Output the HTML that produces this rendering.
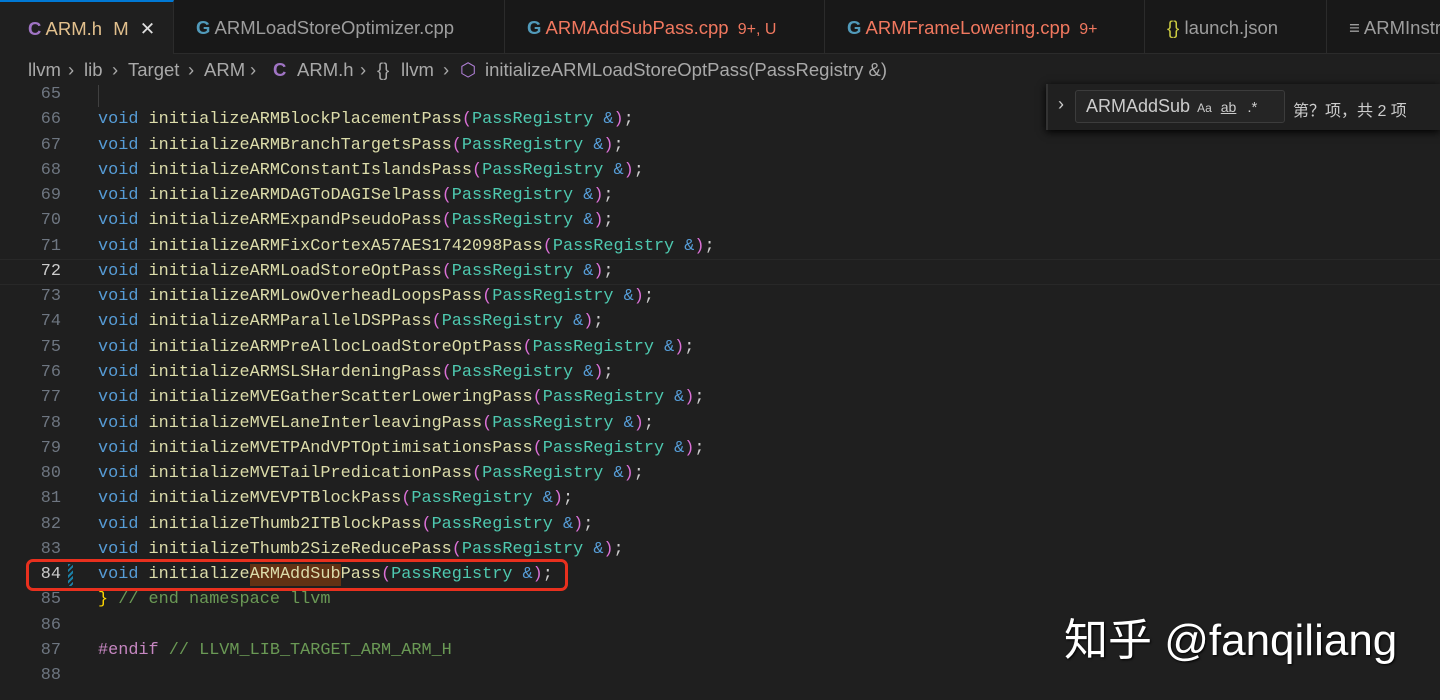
<!DOCTYPE html>
<html><head><meta charset="utf-8"><style>
*{margin:0;padding:0;box-sizing:border-box}
body{width:1440px;height:700px;background:#1f1f1f;overflow:hidden;position:relative;font-family:"Liberation Sans","Noto Sans CJK SC",sans-serif}
.tabs{position:absolute;left:0;top:0;width:1440px;height:54px;background:#181818;border-bottom:1px solid #2b2b2b}
.tab{position:absolute;top:0;height:54px;border-right:1px solid #2b2b2b;font-size:18.5px;line-height:56px;color:#9d9d9d;white-space:nowrap}
.tab.active{background:#1f1f1f;border-top:2px solid #0078d4;line-height:54px;color:#fff}
.crumb{position:absolute;top:57px;font-size:18.5px;color:#a9a9a9;line-height:26px;white-space:nowrap}
.ln{position:absolute;left:0;width:1440px;height:25.27px;line-height:25.27px;white-space:pre;font-family:"Liberation Mono",monospace;font-size:16.85px}
.num{position:absolute;left:0;width:61px;text-align:right;color:#6e7681}
.cd{position:absolute;left:98px}
.v{color:#569cd6}.f{color:#dcdcaa}.t{color:#4ec9b0}.p{color:#da70d6}.c{color:#6a9955}.k{color:#c586c0}.y{color:#ffd700}.w{color:#cccccc}
</style></head><body>
<div class="tabs">
<div class="tab active" style="left:0;width:174px;padding-left:28px"><span style="color:#a074c4;font-weight:bold">C</span> <span style="color:#e2c08d">ARM.h</span> <span style="color:#e2c08d;margin-left:6px">M</span> <span style="margin-left:6px;color:#ddd">✕</span></div>
<div class="tab" style="left:174px;width:331px;padding-left:22px"><span style="color:#519aba;font-weight:bold">G</span> ARMLoadStoreOptimizer.cpp</div>
<div class="tab" style="left:505px;width:320px;padding-left:22px;color:#f1785f"><span style="color:#519aba;font-weight:bold">G</span> ARMAddSubPass.cpp <span style="font-size:16px;margin-left:4px">9+, U</span></div>
<div class="tab" style="left:825px;width:320px;padding-left:22px;color:#f1785f"><span style="color:#519aba;font-weight:bold">G</span> ARMFrameLowering.cpp <span style="font-size:16px;margin-left:4px">9+</span></div>
<div class="tab" style="left:1145px;width:182px;padding-left:22px"><span style="color:#cbcb41">{}</span> launch.json</div>
<div class="tab" style="left:1327px;width:200px;padding-left:22px">≡ ARMInstrInfo</div>
</div>
<div class="crumb" style="left:28px">llvm</div>
<div class="crumb" style="left:68px">›</div>
<div class="crumb" style="left:84px">lib</div>
<div class="crumb" style="left:112px">›</div>
<div class="crumb" style="left:128px">Target</div>
<div class="crumb" style="left:188px">›</div>
<div class="crumb" style="left:204px">ARM</div>
<div class="crumb" style="left:250px">›</div>
<div class="crumb" style="left:273px;color:#a074c4;font-weight:bold">C</div>
<div class="crumb" style="left:297px">ARM.h</div>
<div class="crumb" style="left:360px">›</div>
<div class="crumb" style="left:377px">{}</div>
<div class="crumb" style="left:401px">llvm</div>
<div class="crumb" style="left:443px">›</div>
<div class="crumb" style="left:460px;color:#b180d7">⬡</div>
<div class="crumb" style="left:485px">initializeARMLoadStoreOptPass(PassRegistry &amp;)</div>
<div style="position:absolute;left:98px;top:85px;width:1px;height:22px;background:#404040"></div>
<div style="position:absolute;left:0;top:259px;width:1440px;height:26px;border-top:1px solid #282828;border-bottom:1px solid #282828"></div>
<div style="position:absolute;left:250px;top:564px;width:91px;height:22px;background:#613214"></div>

<div class="ln" style="top:82px"><span class="num">65</span></div>
<div class="ln" style="top:107.27px"><span class="num">66</span><span class="cd"><span class="v">void</span> <span class="f">initializeARMBlockPlacementPass</span><span class="p">(</span><span class="t">PassRegistry</span> <span class="v">&amp;</span><span class="p">)</span><span class="w">;</span></span></div>
<div class="ln" style="top:132.54px"><span class="num">67</span><span class="cd"><span class="v">void</span> <span class="f">initializeARMBranchTargetsPass</span><span class="p">(</span><span class="t">PassRegistry</span> <span class="v">&amp;</span><span class="p">)</span><span class="w">;</span></span></div>
<div class="ln" style="top:157.81px"><span class="num">68</span><span class="cd"><span class="v">void</span> <span class="f">initializeARMConstantIslandsPass</span><span class="p">(</span><span class="t">PassRegistry</span> <span class="v">&amp;</span><span class="p">)</span><span class="w">;</span></span></div>
<div class="ln" style="top:183.08px"><span class="num">69</span><span class="cd"><span class="v">void</span> <span class="f">initializeARMDAGToDAGISelPass</span><span class="p">(</span><span class="t">PassRegistry</span> <span class="v">&amp;</span><span class="p">)</span><span class="w">;</span></span></div>
<div class="ln" style="top:208.35px"><span class="num">70</span><span class="cd"><span class="v">void</span> <span class="f">initializeARMExpandPseudoPass</span><span class="p">(</span><span class="t">PassRegistry</span> <span class="v">&amp;</span><span class="p">)</span><span class="w">;</span></span></div>
<div class="ln" style="top:233.62px"><span class="num">71</span><span class="cd"><span class="v">void</span> <span class="f">initializeARMFixCortexA57AES1742098Pass</span><span class="p">(</span><span class="t">PassRegistry</span> <span class="v">&amp;</span><span class="p">)</span><span class="w">;</span></span></div>
<div class="ln" style="top:258.89px"><span class="num" style="color:#ccc">72</span><span class="cd"><span class="v">void</span> <span class="f">initializeARMLoadStoreOptPass</span><span class="p">(</span><span class="t">PassRegistry</span> <span class="v">&amp;</span><span class="p">)</span><span class="w">;</span></span></div>
<div class="ln" style="top:284.16px"><span class="num">73</span><span class="cd"><span class="v">void</span> <span class="f">initializeARMLowOverheadLoopsPass</span><span class="p">(</span><span class="t">PassRegistry</span> <span class="v">&amp;</span><span class="p">)</span><span class="w">;</span></span></div>
<div class="ln" style="top:309.43px"><span class="num">74</span><span class="cd"><span class="v">void</span> <span class="f">initializeARMParallelDSPPass</span><span class="p">(</span><span class="t">PassRegistry</span> <span class="v">&amp;</span><span class="p">)</span><span class="w">;</span></span></div>
<div class="ln" style="top:334.7px"><span class="num">75</span><span class="cd"><span class="v">void</span> <span class="f">initializeARMPreAllocLoadStoreOptPass</span><span class="p">(</span><span class="t">PassRegistry</span> <span class="v">&amp;</span><span class="p">)</span><span class="w">;</span></span></div>
<div class="ln" style="top:359.97px"><span class="num">76</span><span class="cd"><span class="v">void</span> <span class="f">initializeARMSLSHardeningPass</span><span class="p">(</span><span class="t">PassRegistry</span> <span class="v">&amp;</span><span class="p">)</span><span class="w">;</span></span></div>
<div class="ln" style="top:385.24px"><span class="num">77</span><span class="cd"><span class="v">void</span> <span class="f">initializeMVEGatherScatterLoweringPass</span><span class="p">(</span><span class="t">PassRegistry</span> <span class="v">&amp;</span><span class="p">)</span><span class="w">;</span></span></div>
<div class="ln" style="top:410.51px"><span class="num">78</span><span class="cd"><span class="v">void</span> <span class="f">initializeMVELaneInterleavingPass</span><span class="p">(</span><span class="t">PassRegistry</span> <span class="v">&amp;</span><span class="p">)</span><span class="w">;</span></span></div>
<div class="ln" style="top:435.78px"><span class="num">79</span><span class="cd"><span class="v">void</span> <span class="f">initializeMVETPAndVPTOptimisationsPass</span><span class="p">(</span><span class="t">PassRegistry</span> <span class="v">&amp;</span><span class="p">)</span><span class="w">;</span></span></div>
<div class="ln" style="top:461.05px"><span class="num">80</span><span class="cd"><span class="v">void</span> <span class="f">initializeMVETailPredicationPass</span><span class="p">(</span><span class="t">PassRegistry</span> <span class="v">&amp;</span><span class="p">)</span><span class="w">;</span></span></div>
<div class="ln" style="top:486.32px"><span class="num">81</span><span class="cd"><span class="v">void</span> <span class="f">initializeMVEVPTBlockPass</span><span class="p">(</span><span class="t">PassRegistry</span> <span class="v">&amp;</span><span class="p">)</span><span class="w">;</span></span></div>
<div class="ln" style="top:511.59px"><span class="num">82</span><span class="cd"><span class="v">void</span> <span class="f">initializeThumb2ITBlockPass</span><span class="p">(</span><span class="t">PassRegistry</span> <span class="v">&amp;</span><span class="p">)</span><span class="w">;</span></span></div>
<div class="ln" style="top:536.86px"><span class="num">83</span><span class="cd"><span class="v">void</span> <span class="f">initializeThumb2SizeReducePass</span><span class="p">(</span><span class="t">PassRegistry</span> <span class="v">&amp;</span><span class="p">)</span><span class="w">;</span></span></div>
<div class="ln" style="top:562.13px"><span class="num" style="color:#ccc">84</span><span class="cd"><span class="v">void</span> <span class="f">initializeARMAddSubPass</span><span class="p">(</span><span class="t">PassRegistry</span> <span class="v">&amp;</span><span class="p">)</span><span class="w">;</span></span></div>
<div class="ln" style="top:587.4px"><span class="num">85</span><span class="cd"><span class="y">}</span> <span class="c">// end namespace llvm</span></span></div>
<div class="ln" style="top:612.67px"><span class="num">86</span></div>
<div class="ln" style="top:637.94px"><span class="num">87</span><span class="cd"><span class="k">#endif</span> <span class="c">// LLVM_LIB_TARGET_ARM_ARM_H</span></span></div>
<div class="ln" style="top:663.21px"><span class="num">88</span></div>

<div style="position:absolute;left:68px;top:564px;width:5px;height:22px;background:repeating-linear-gradient(135deg,#1b81a8 0 2px,#1f1f1f 2px 4px)"></div>
<div style="position:absolute;left:26px;top:559px;width:542px;height:32px;border:3px solid #e8301e;border-radius:7px"></div>
<div style="position:absolute;left:1046px;top:84px;width:394px;height:46px;background:#202020;border-left:2px solid #333;box-shadow:0 2px 8px #000"></div>
<div style="position:absolute;left:1058px;top:94px;color:#ccc;font-size:18px">›</div>
<div style="position:absolute;left:1075px;top:90px;width:210px;height:33px;background:#252525;border:1px solid #3c3c3c;border-radius:3px"></div>
<div style="position:absolute;left:1086px;top:96px;color:#ccc;font-size:18px;white-space:nowrap">ARMAddSub <span style="font-size:12px;margin-left:2px">Aa</span> <span style="font-size:14px;text-decoration:underline;margin-left:4px">ab</span> <span style="font-size:15px;margin-left:6px">.*</span></div>
<div style="position:absolute;left:1293px;top:97px;color:#ccc;font-size:16px;white-space:nowrap">第？项，共 2 项</div>
<div style="position:absolute;left:1064px;top:604px;color:#fff;font-size:44px;white-space:nowrap;text-shadow:1px 1px 2px #000">知乎 @fanqiliang</div>
</body></html>
